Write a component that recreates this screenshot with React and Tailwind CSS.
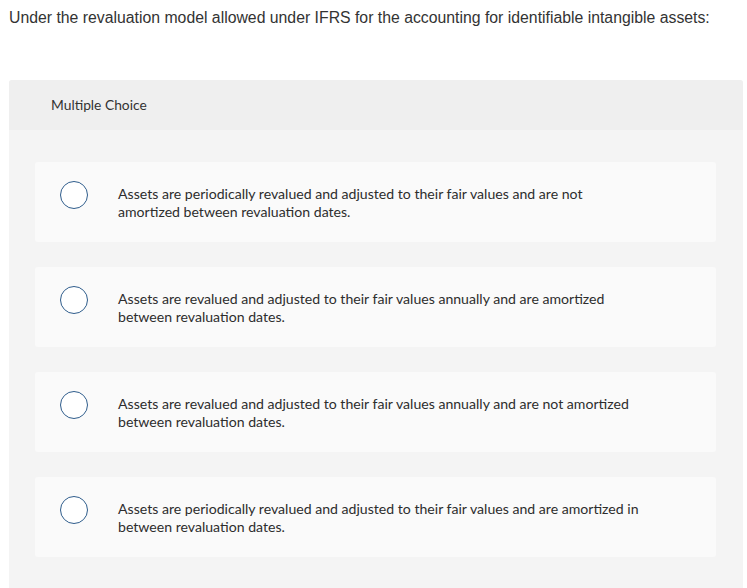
import React from "react";

const options = [
  "Assets are periodically revalued and adjusted to their fair values and are not amortized between revaluation dates.",
  "Assets are revalued and adjusted to their fair values annually and are amortized between revaluation dates.",
  "Assets are revalued and adjusted to their fair values annually and are not amortized between revaluation dates.",
  "Assets are periodically revalued and adjusted to their fair values and are amortized in between revaluation dates.",
];

export default function App() {
  return (
    <div className="w-[747px] h-[588px] overflow-hidden bg-white" style={{ fontFamily: '"Liberation Sans", Arial, sans-serif' }}>
      <p className="pl-[9px] pt-[8px] text-[15.8px] leading-[20px] text-[#333]">
        Under the revaluation model allowed under IFRS for the accounting for identifiable intangible assets:
      </p>
      <div className="ml-[9px] mr-[4px] mt-[52px] rounded-t-[3px] bg-[#f4f4f4]">
        <div className="h-[50px] flex items-center pl-[42px] bg-[#efefef] rounded-t-[3px] text-[13.8px] text-[#333]" style={{ fontFamily: 'Lato, sans-serif' }}>
          Multiple Choice
        </div>
        <div className="pt-[32px] pl-[26px] pr-[27px] flex flex-col gap-[25px] pb-[40px]">
          {options.map((t, i) => (
            <div key={i} className="h-[80px] rounded-[3px] bg-[#fafafa] flex items-start">
              <div className="ml-[25px] mt-[19px] w-[28px] h-[28px] rounded-full border-[1.5px] border-[#2f5d8c] bg-white shrink-0" />
              <div className="ml-[30px] mt-[23px] max-w-[524px] text-[14.1px] leading-[18px] text-[#2d2d2d]" style={{ fontFamily: 'Lato, sans-serif' }}>
                {t}
              </div>
            </div>
          ))}
        </div>
      </div>
    </div>
  );
}
